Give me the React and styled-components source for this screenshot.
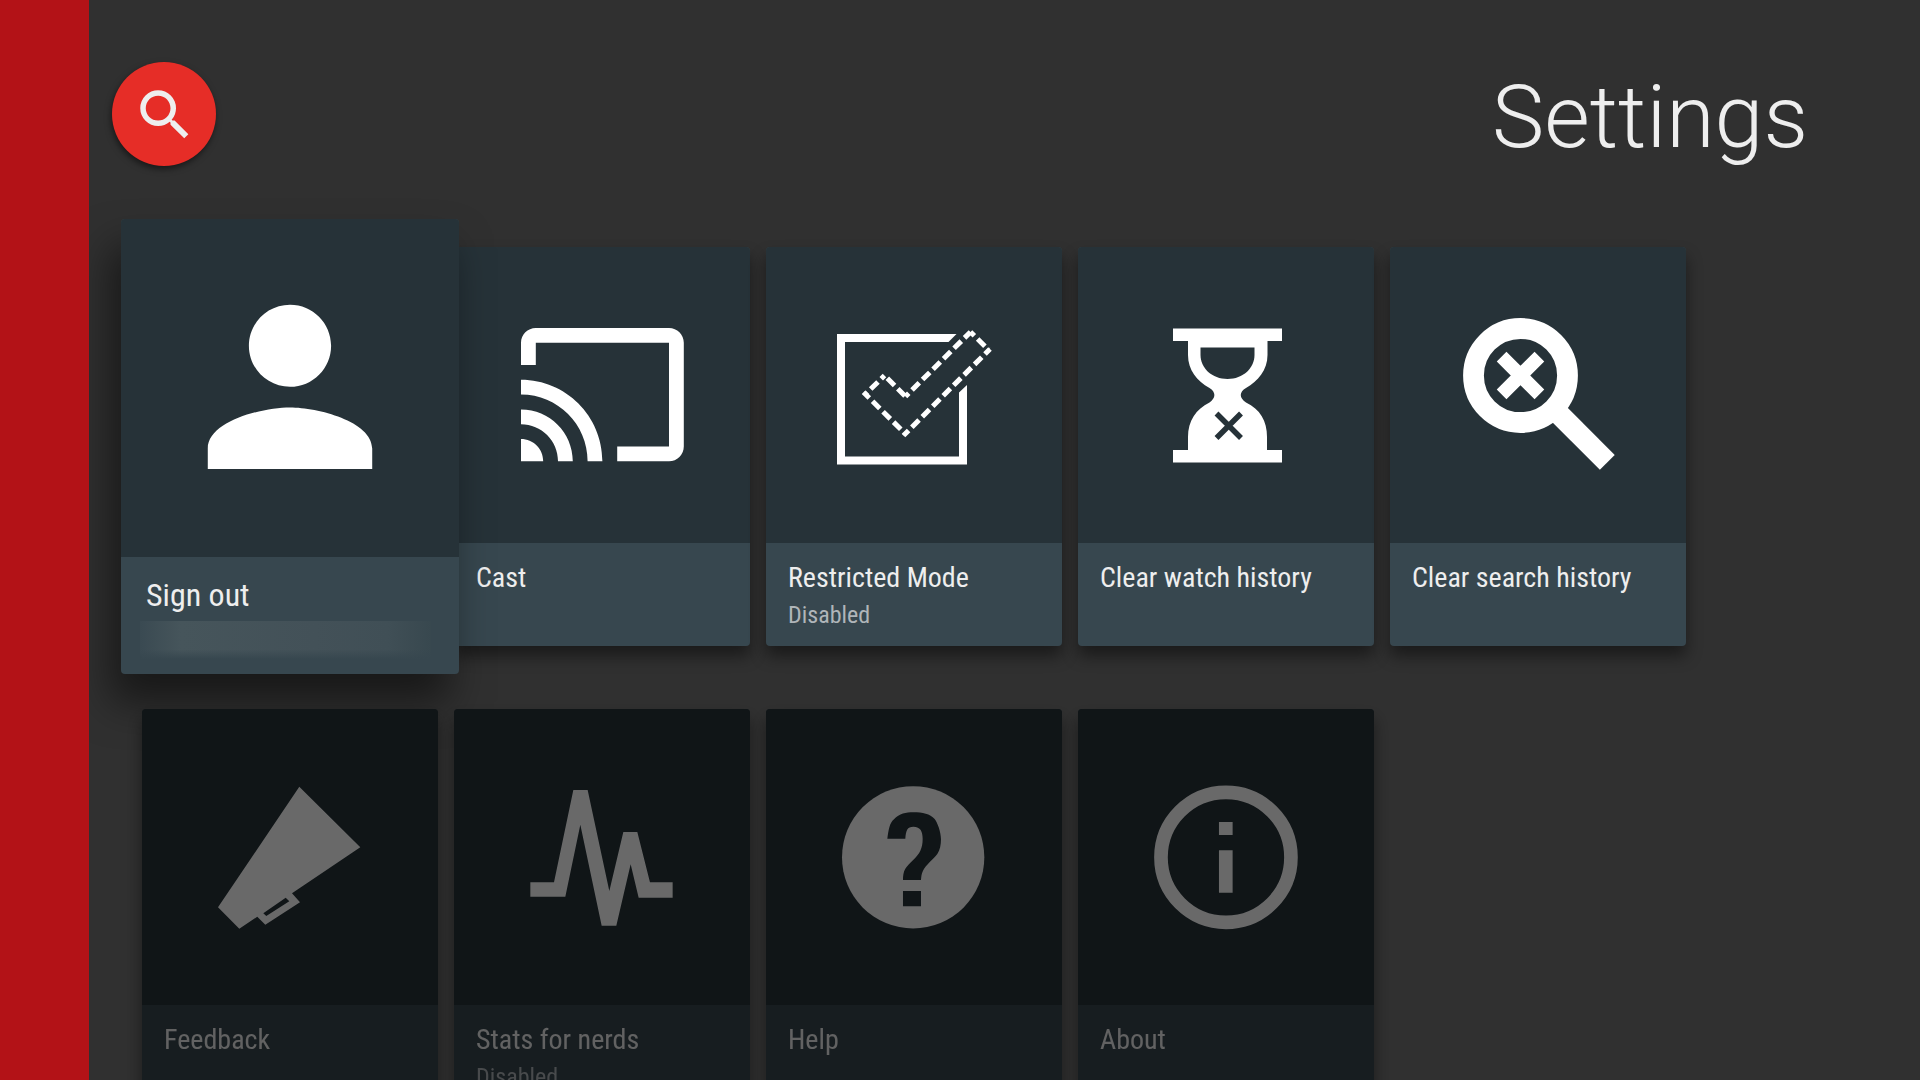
import React from "react";
import styled, { createGlobalStyle, css } from "styled-components";

const GlobalStyle = createGlobalStyle`
    * {
        box-sizing: border-box;
    }

    body {
        margin: 0;
        background-color: #303030;
        font-family: Roboto, sans-serif;
        overflow: hidden;
    }
`;

const Screen = styled.div`
    display: flex;
    height: 100vh;
    overflow: hidden;
    background-color: #303030;
`;

const SideBar = styled.nav`
    flex: 0 0 89px;
    background-color: #b31217;
    position: relative;
    z-index: 2;
`;

const Content = styled.div`
    flex: 1;
    min-width: 0;
`;

const Header = styled.header`
    display: flex;
    align-items: flex-start;
    justify-content: space-between;
    padding: 62px 112px 0 23px;
`;

const SearchButton = styled.button`
    display: flex;
    align-items: center;
    justify-content: center;
    width: 104px;
    height: 104px;
    padding: 1px 0 0 1px;
    border: none;
    border-radius: 50%;
    background-color: #e62d27;
    color: #eee;
    box-shadow: -1px 3px 6px rgba(0, 0, 0, 0.5);

    svg {
        width: 66px;
        height: 66px;
    }
`;

const Title = styled.h1`
    margin: 0;
    font-size: 88px;
    line-height: 110px;
    font-weight: 300;
    color: #eee;
`;

const Rows = styled.main`
    display: flex;
    flex-direction: column;
    gap: 63px;
    padding: 75px 0 0 53px;
`;

const Row = styled.section`
    display: flex;
    align-items: flex-start;
    gap: 16px;
`;

const CardButton = styled.button`
    display: flex;
    flex-direction: column;
    flex: none;
    width: 296px;
    padding: 0;
    border: none;
    border-radius: 4px;
    overflow: hidden;
    text-align: left;
    color: #fff;
    background-color: #37474f;
    font-family: "Roboto Condensed", "Liberation Sans Narrow", Roboto, sans-serif;
    box-shadow: 0 10px 16px rgba(0, 0, 0, 0.45);

    ${({ $dimmed }) => $dimmed && css`
        filter: brightness(0.41);
        z-index: 1;
    `}

    ${({ $focused }) => $focused && css`
        width: 338px;
        margin: -28px -21px;
        z-index: 1;
        box-shadow: -10px 28px 40px rgba(0, 0, 0, 0.5);
    `}
`;

const Picture = styled.span`
    display: block;
    width: 100%;
    aspect-ratio: 1;
    background-color: #263238;

    svg {
        display: block;
        width: 100%;
        height: 100%;
    }
`;

const Info = styled.span`
    display: flex;
    flex-direction: column;
    gap: 3px;
    width: 100%;
    min-height: ${({ $focused }) => ($focused ? "117px" : "103px")};
    padding: ${({ $focused }) => ($focused ? "18px 25px 12px" : "17px 22px 12px")};
`;

const Name = styled.span`
    font-size: ${({ $focused }) => ($focused ? "32px" : "28px")};
    line-height: ${({ $focused }) => ($focused ? "40px" : "36px")};
    color: #eee;
    white-space: nowrap;
`;

const Status = styled.span`
    font-size: 24px;
    line-height: 32px;
    color: #afb5b9;
`;

const HiddenAccount = styled.span`
    height: 38px;
    margin: 3px 3px 0 -6px;
    background:
        linear-gradient(180deg, transparent 75%, #37474f),
        linear-gradient(90deg, #3a4a52, #46555b 14%, #435158 60%, #404f56 85%, #38484f);
`;

const SearchIcon = () => (
    <svg viewBox="0 0 24 24" fill="currentColor" aria-hidden="true">
        <path d="M15.5 14h-.79l-.28-.27A6.47 6.47 0 0 0 16 9.5 6.5 6.5 0 1 0 9.5 16c1.61 0 3.09-.59 4.23-1.57l.27.28v.79l5 4.99L20.49 19l-4.99-5zm-6 0C7.01 14 5 11.99 5 9.5S7.01 5 9.5 5 14 7.01 14 9.5 11.99 14 9.5 14z" />
    </svg>
);

const PersonIcon = () => (
    <g transform="translate(40 39) scale(9)">
        <path d="M12 12c2.21 0 4-1.79 4-4s-1.79-4-4-4-4 1.79-4 4 1.79 4 4 4zm0 2c-2.67 0-8 1.34-8 4v2h16v-2c0-2.66-5.33-4-8-4z" />
    </g>
);

const CastIcon = () => (
    <g transform="translate(59.6 58.8) scale(7.4)">
        <path d="M21 3H3c-1.1 0-2 .9-2 2v3h2V5h18v14h-7v2h7c1.1 0 2-.9 2-2V5c0-1.1-.9-2-2-2zM1 18v3h3c0-1.66-1.34-3-3-3zm0-4v2c2.76 0 5 2.24 5 5h2c0-3.87-3.13-7-7-7zm0-4v2c4.97 0 9 4.03 9 9h2c0-6.08-4.93-11-11-11z" />
    </g>
);

const RestrictedIcon = () => (
    <>
        <path d="M71 87H190.5L182.5 95H79V209.5H193V145.5L201 138V217.5H71Z" />
        <g fill="none" stroke="#fff" strokeWidth="5" strokeDasharray="10.2 4.6">
            <path d="M99.5 147.2L118.5 128.5" strokeDashoffset="7.5" />
            <path d="M118.5 128.5L139.5 149.5" strokeDashoffset="10.8" />
            <path d="M139.5 149.5L204.5 85" strokeDashoffset="5.6" />
            <path d="M204.5 85L222.5 102.7" strokeDashoffset="4.8" />
            <path d="M137.5 188.6L224 101.9" strokeDashoffset="3" />
            <path d="M97.5 145.2L139.3 186.8" strokeDashoffset="2" />
        </g>
    </>
);

const HourglassIcon = () => (
    <>
        <path d="M95 81.5H204V94H189.5V108C189.5 123 180 134 168 141C161 145 161 151 168 155.5C182 162 189 174 189 190V203H204V215.5H95V203H110V190C110 174 118 162 131.5 155.5C138 151 138 145 131.5 141C119 134 110 123 110 108V94H95Z" />
        <path fill="#263238" d="M122.5 100.5H176.5V108C176.5 121 165 132 149.5 132C134 132 122.5 121 122.5 108Z" />
        <path fill="none" stroke="#263238" strokeWidth="5.5" d="M138.5 166.5L163 191M163 166.5L138.5 191" />
    </>
);

const ClearSearchIcon = () => (
    <g fill="none" stroke="#fff">
        <circle cx="130.5" cy="128.5" r="47" strokeWidth="20.8" />
        <path strokeWidth="13.7" d="M111.6 109.6L149.4 147.4M149.4 109.6L111.6 147.4" />
        <path strokeWidth="21" d="M166 164L217.3 215.3" />
    </g>
);

const FeedbackIcon = () => (
    <path fillRule="evenodd" d="M157.3 77.7L218.3 138.3L150 184.3L158 193.3L123.3 215.7L115.3 207.7L97.3 219.7L76 198.3ZM121.3 204.3L143.7 188.7L147.3 192.3L124.3 207Z" />
);

const StatsIcon = () => (
    <g transform="translate(46 61) scale(0.3333)">
        <path d="M91 337H162L220 60H263L328 363L370 186H412L450 337H518V383H416L392 283L349 467H305L241 164L196 380H91Z" />
    </g>
);

const HelpIcon = () => (
    <g transform="translate(54 61) scale(0.3333)">
        <circle cx="279.5" cy="262" r="213.5" />
        <g fill="#263238">
            <path d="M202 206C206 180 208 160 222 148C238 131 258 127 280 127C308 127 330 132 344 147C352 157 363 185 363 208C363 225 360 240 352 252C340 268 318 284 309 302C304 312 304 320 303 330H249C249 318 250 306 256 296C266 280 294 260 301 242C306 230 308 222 308 206C308 185 302 170 280 170C262 170 258 180 256 206Z" />
            <path d="M249 363H303V409H249Z" />
        </g>
    </g>
);

const AboutIcon = () => (
    <g transform="translate(-258 61) scale(0.3333)">
        <circle cx="1218" cy="262" r="195" fill="none" stroke="#fff" strokeWidth="41" />
        <path d="M1197 156H1238V195H1197ZM1197 241H1238V368H1197Z" />
    </g>
);

const accountCards = [
    { name: "Sign out", icon: PersonIcon, focused: true },
    { name: "Cast", icon: CastIcon },
    { name: "Restricted Mode", status: "Disabled", icon: RestrictedIcon },
    { name: "Clear watch history", icon: HourglassIcon },
    { name: "Clear search history", icon: ClearSearchIcon },
];

const supportCards = [
    { name: "Feedback", icon: FeedbackIcon },
    { name: "Stats for nerds", status: "Disabled", icon: StatsIcon },
    { name: "Help", icon: HelpIcon },
    { name: "About", icon: AboutIcon },
];

function Card({ card, dimmed }) {
    const Icon = card.icon;

    return (
        <CardButton type="button" $focused={card.focused} $dimmed={dimmed}>
            <Picture>
                <svg viewBox="0 0 296 296" fill="#fff" aria-hidden="true">
                    <Icon />
                </svg>
            </Picture>
            <Info $focused={card.focused}>
                <Name $focused={card.focused}>{card.name}</Name>
                {card.status && <Status>{card.status}</Status>}
                {card.focused && <HiddenAccount />}
            </Info>
        </CardButton>
    );
}

export default function App() {
    return (
        <>
            <GlobalStyle />
            <Screen>
                <SideBar aria-label="Menu" />
                <Content>
                    <Header>
                        <SearchButton type="button" aria-label="Search">
                            <SearchIcon />
                        </SearchButton>
                        <Title>Settings</Title>
                    </Header>
                    <Rows>
                        <Row>
                            {accountCards.map((card) => <Card key={card.name} card={card} />)}
                        </Row>
                        <Row>
                            {supportCards.map((card) => <Card key={card.name} card={card} dimmed />)}
                        </Row>
                    </Rows>
                </Content>
            </Screen>
        </>
    );
}
